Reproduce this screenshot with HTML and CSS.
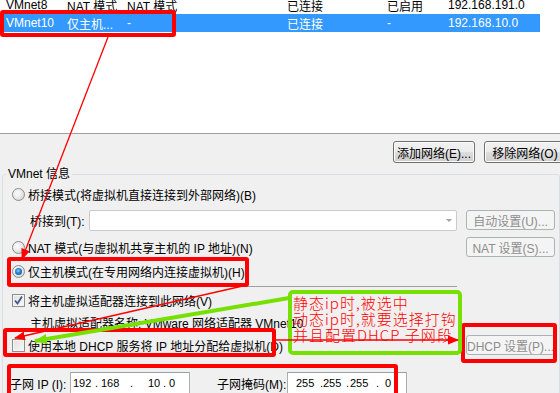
FILE: index.html
```html
<!DOCTYPE html>
<html lang="zh-CN">
<head>
    <meta charset="UTF-8">
    <meta name="viewport" content="width=device-width, initial-scale=1.0">
    <title>虚拟网络编辑器</title>
    <link rel="stylesheet" href="styles.css">
</head>
<body>
    <div class="editor">
        <div class="net-list">
            <div class="net-rows">
                <div class="net-row">
                    <span>VMnet8</span><span>NAT 模式</span><span>NAT 模式</span><span>已连接</span><span>已启用</span><span>192.168.191.0</span>
                </div>
                <div class="net-row selected">
                    <span>VMnet10</span><span>仅主机...</span><span>-</span><span>已连接</span><span>-</span><span>192.168.10.0</span>
                </div>
            </div>
        </div>

        <div class="list-actions">
            <button class="btn">添加网络(E)...</button>
            <button class="btn">移除网络(O)</button>
        </div>

        <fieldset class="vmnet-info">
            <legend>VMnet 信息</legend>

            <div class="opt-row row-a">
                <span class="radio"></span>
                <span>桥接模式(将虚拟机直接连接到外部网络)(B)</span>
            </div>

            <div class="opt-row row-b sub">
                <span class="field-label">桥接到(T):</span>
                <div class="combo"><span class="combo-arrow"></span></div>
                <button class="btn side" disabled>自动设置(U)...</button>
            </div>

            <div class="opt-row row-c">
                <span class="radio"></span>
                <span>NAT 模式(与虚拟机共享主机的 IP 地址)(N)</span>
                <button class="btn side" disabled>NAT 设置(S)...</button>
            </div>

            <div class="opt-row row-d">
                <span class="radio checked"></span>
                <span>仅主机模式(在专用网络内连接虚拟机)(H)</span>
            </div>

            <div class="separator"></div>

            <div class="opt-row row-e">
                <span class="check">
                    <svg width="11" height="11" viewBox="0 0 11 11"><path d="M2 5.5 L4.5 8.5 L9 1.5" fill="none" stroke="#43568a" stroke-width="1.8"/></svg>
                </span>
                <span>将主机虚拟适配器连接到此网络(V)</span>
            </div>

            <div class="opt-row row-f sub">
                <span>主机虚拟适配器名称: VMware 网络适配器 VMnet10</span>
            </div>

            <div class="opt-row row-g">
                <span class="check"></span>
                <span>使用本地 DHCP 服务将 IP 地址分配给虚拟机(D)</span>
                <button class="btn side" disabled>DHCP 设置(P)...</button>
            </div>

            <div class="opt-row row-h">
                <span class="ip-label">子网 IP (I):</span>
                <div class="ip-box subnet">
                    <span class="o1">192</span><span class="d1">.</span><span class="o2">168</span><span class="d2">.</span><span class="o3">10</span><span class="d3">.</span><span>0</span>
                </div>
                <span class="mask-label">子网掩码(M):</span>
                <div class="ip-box mask">
                    <span class="o1">255</span><span class="d1">.</span><span class="o2">255</span><span class="d2">.</span><span class="o3">255</span><span class="d3">.</span><span>0</span>
                </div>
            </div>
        </fieldset>

        <div class="note">
            静态ip时,被选中<br>
            动态ip时,就要选择打钩<br>
            并且配置DHCP 子网段
        </div>

        <!-- annotation layer drawn over the dialog -->
        <svg class="marks" width="560" height="393" viewBox="0 0 560 393">
            <defs>
                <marker id="red-head" markerWidth="11" markerHeight="9" refX="10" refY="4.5" orient="auto" markerUnits="userSpaceOnUse">
                    <path d="M0,0 L11,4.5 L0,9 z" fill="#ff0000"/>
                </marker>
                <marker id="green-head" markerWidth="13" markerHeight="10" refX="12" refY="5" orient="auto" markerUnits="userSpaceOnUse">
                    <path d="M0,0 L13,5 L0,10 z" fill="#76e000"/>
                </marker>
            </defs>

            <rect x="2" y="12" width="172" height="23" rx="1" fill="none" stroke="#ff0000" stroke-width="4"/>
            <rect x="9" y="259" width="238" height="26" rx="1" fill="none" stroke="#ff0000" stroke-width="4"/>
            <rect x="5" y="330" width="269" height="25" rx="1" fill="none" stroke="#ff0000" stroke-width="4"/>
            <rect x="9" y="366" width="387" height="40" rx="1" fill="none" stroke="#ff0000" stroke-width="4"/>
            <rect x="463" y="325" width="92" height="36" rx="1" fill="none" stroke="#ff0000" stroke-width="4"/>
            <rect x="290" y="292" width="170" height="61" rx="3" fill="none" stroke="#76e000" stroke-width="4"/>

            <line x1="108" y1="37" x2="22" y2="259" stroke="#ff0000" stroke-width="1.3" marker-end="url(#red-head)"/>
            <line x1="247" y1="285" x2="15" y2="338" stroke="#ff0000" stroke-width="1.3" marker-end="url(#red-head)"/>
            <line x1="289" y1="298" x2="35" y2="341" stroke="#76e000" stroke-width="4" marker-end="url(#green-head)"/>
            <line x1="276" y1="340" x2="458" y2="340" stroke="#ff0000" stroke-width="1.3" marker-end="url(#red-head)"/>
        </svg>
    </div>
</body>
</html>
```

FILE: styles.css
```css
html, body {
    margin: 0;
    padding: 0;
}

body {
    font-family: "Liberation Sans", "Noto Sans CJK SC", sans-serif;
    font-size: 12px;
    color: #000;
    background-color: #f0f0f0;
    width: 560px;
    height: 393px;
    overflow: hidden;
}

.editor {
    position: relative;
    width: 560px;
    height: 393px;
}

/* network list */
.net-list {
    background: #fff;
    height: 133px;
    border-bottom: 1px solid #a0a0a0;
    overflow: hidden;
}

.net-rows {
    margin-top: -4px;
}

.net-row {
    display: grid;
    grid-template-columns: 61px 60px 160px 100px 61px 1fr;
    align-items: center;
    width: 534px;
    height: 18px;
    padding-left: 6px;
    white-space: nowrap;
}

.net-row.selected {
    background: #3399ff;
    color: #fff;
}

/* buttons */
.list-actions {
    display: flex;
    justify-content: flex-end;
    gap: 9px;
    margin-top: 7px;
    margin-right: -6px;
}

.btn {
    height: 22px;
    width: 82px;
    padding: 0;
    font: inherit;
    color: #000;
    border: 1px solid #707070;
    border-radius: 3px;
    background: linear-gradient(#f2f2f2 0%, #ebebeb 50%, #dddddd 51%, #cfcfcf 100%);
    box-shadow: inset 0 0 0 1px #fbfbfb;
    white-space: nowrap;
}

.btn:disabled {
    color: #8d8d8d;
    border-color: #adb2b5;
    background: #f4f4f4;
    box-shadow: none;
}

.btn.side {
    width: 89px;
    height: 20px;
    margin-left: auto;
}

/* VMnet info group */
.vmnet-info {
    margin: 4px 0 0 2px;
    padding: 2px 4px 0 8px;
    border: 1px solid #d5dfe5;
    border-radius: 3px;
    min-width: 0;
}

.vmnet-info legend {
    margin-left: -5px;
    padding: 0 2px;
    line-height: 14px;
}

.opt-row {
    display: flex;
    align-items: center;
    gap: 3px;
    white-space: nowrap;
}

.opt-row.sub {
    padding-left: 19px;
}

.row-a { height: 22px; }
.row-b { height: 30px; gap: 0; }
.row-c { height: 24px; }
.row-d { height: 24px; }
.row-e { height: 22px; }
.row-f { height: 22px; }
.row-g { height: 24px; }
.row-h { height: 22px; margin-top: 15px; gap: 0; }

.field-label {
    width: 59px;
}

.combo {
    position: relative;
    flex: 1;
    height: 19px;
    margin-right: 9px;
    background: #fff;
    border: 1px solid #c9cbcf;
    border-radius: 2px;
}

.combo-arrow {
    position: absolute;
    right: 4px;
    top: 8px;
    border-left: 3px solid transparent;
    border-right: 3px solid transparent;
    border-top: 3px solid #a3a3a3;
}

.radio {
    flex: none;
    position: relative;
    width: 11px;
    height: 11px;
    border: 1px solid #8a8c8e;
    border-radius: 50%;
    background: radial-gradient(circle at 40% 40%, #ffffff 0%, #eaeaea 45%, #c9c9c9 100%);
    margin-left: 1px;
}

.radio.checked::after {
    content: "";
    position: absolute;
    left: 2px;
    top: 2px;
    width: 7px;
    height: 7px;
    border-radius: 50%;
    background: radial-gradient(circle at 45% 40%, #8fd3ff 0%, #2a83d0 40%, #0f4b8a 100%);
}

.check {
    flex: none;
    width: 11px;
    height: 11px;
    border: 1px solid #8e8f8f;
    background: linear-gradient(135deg, #e1e1e1, #f8f8f8);
    box-shadow: inset 0 0 0 1px #f4f4f4;
    margin-left: 1px;
    display: flex;
    align-items: center;
    justify-content: center;
}

.separator {
    height: 1px;
    margin: 3px 98px 2px 16px;
    background: #a0a0a0;
}

/* subnet fields */
.ip-label {
    width: 60px;
    margin-left: -1px;
}

.mask-label {
    width: 70px;
    margin-left: 27px;
}

.ip-box {
    display: flex;
    align-items: center;
    height: 20px;
    background: #fff;
    border: 1px solid #abadb3;
    border-top-color: #9ca0a8;
    font-size: 11px;
}

.ip-box.subnet {
    width: 116px;
    padding-left: 2px;
}

.ip-box.subnet .o1 { width: 22px; }
.ip-box.subnet .d1 { width: 6px; }
.ip-box.subnet .o2 { width: 29px; }
.ip-box.subnet .d2 { width: 18px; }
.ip-box.subnet .o3 { width: 15px; }
.ip-box.subnet .d3 { width: 6px; }

.ip-box.mask {
    width: 110px;
    padding-left: 8px;
}

.ip-box.mask .o1 { width: 24px; }
.ip-box.mask .d1 { width: 3px; }
.ip-box.mask .o2 { width: 23px; }
.ip-box.mask .d2 { width: 4px; }
.ip-box.mask .o3 { width: 26px; }
.ip-box.mask .d3 { width: 9px; }

/* annotations */
.marks {
    position: absolute;
    left: 0;
    top: 0;
    pointer-events: none;
}

.note {
    position: absolute;
    left: 293px;
    top: 295px;
    width: 166px;
    overflow: hidden;
    font-family: "Noto Sans CJK SC", sans-serif;
    font-size: 15px;
    font-weight: 300;
    line-height: 16px;
    letter-spacing: 1px;
    color: #ff0000;
    white-space: nowrap;
}
```
